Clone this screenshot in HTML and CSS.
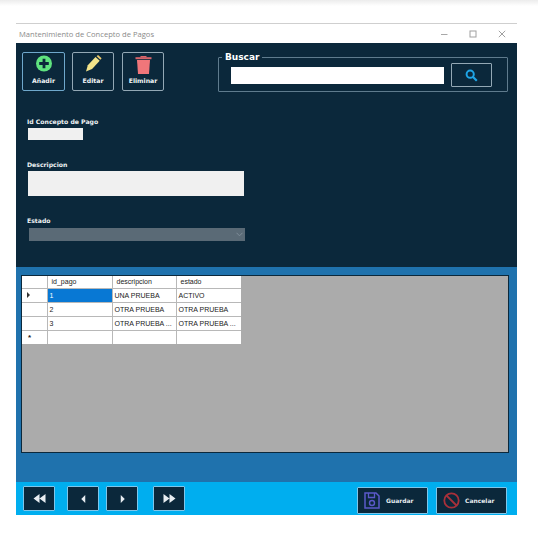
FILE: index.html
```html
<!DOCTYPE html>
<html lang="es">
<head>
<meta charset="utf-8">
<title>Mantenimiento de Concepto de Pagos</title>
<link rel="stylesheet" href="styles.css">
</head>
<body>
<div class="shade"></div>
<main class="window">
  <header class="titlebar">
    <span class="title">Mantenimiento de Concepto de Pagos</span>
    <div class="winctl">
      <svg width="8" height="8" viewBox="0 0 8 8"><path d="M1 4.500h6.500" stroke="#a8a8a8" fill="none"/></svg>
      <svg width="8" height="8" viewBox="0 0 8 8"><rect x="1" y="1" width="6" height="6" stroke="#a0a0a0" fill="none"/></svg>
      <svg width="8" height="8" viewBox="0 0 8 8"><path d="M.8.8l6.400 6.400M7.200.8L.8 7.200" stroke="#a0a0a0" fill="none"/></svg>
    </div>
  </header>

  <section class="form">
    <div class="toolbar">
      <div class="tools">
        <button class="tool active">
          <svg width="16" height="17" viewBox="0 0 16 16"><circle cx="8" cy="8" r="8" fill="#5fe37f"/><path d="M8 3.200v9.600M3.200 8h9.600" stroke="#0b283b" stroke-width="2.800"/></svg>
          <span>Añadir</span>
        </button>
        <button class="tool">
          <svg width="17" height="17" viewBox="0 0 17 17"><path d="M1 16.500l1.800-6.200L10.500 2l4.200 3.800-7.600 8.200z" fill="#f3e48a"/><path d="M11.600 1.200l1.400-1.200 3.600 3.200-1.200 1.600z" fill="#efcb6c"/></svg>
          <span>Editar</span>
        </button>
        <button class="tool">
          <svg width="17" height="19" viewBox="0 0 17 19"><path d="M5.500 1h6v1.400h-6z" fill="#d9666c"/><rect x="0.500" y="2.200" width="16" height="2" fill="#d8646a"/><path d="M2 5h13l-1 14H3z" fill="#f0767a"/></svg>
          <span>Eliminar</span>
        </button>
      </div>
      <fieldset class="search">
        <legend>Buscar</legend>
        <div class="search-row">
          <div class="search-input"></div>
          <button class="search-btn">
            <svg width="13" height="13" viewBox="0 0 13 13"><circle cx="5.200" cy="5.200" r="3.600" fill="none" stroke="#1fa5e6" stroke-width="2"/><path d="M8 8l3.800 3.800" stroke="#1fa5e6" stroke-width="2.200"/></svg>
          </button>
        </div>
      </fieldset>
    </div>

    <div class="field field-id">
      <label>Id Concepto de Pago</label>
      <div class="input input-id"></div>
    </div>
    <div class="field field-desc">
      <label>Descripcion</label>
      <div class="input input-desc"></div>
    </div>
    <div class="field field-estado">
      <label>Estado</label>
      <div class="select">
        <svg width="7" height="5" viewBox="0 0 7 5"><path d="M.5 .8l3 3 3-3" fill="none" stroke="#7f8d98"/></svg>
      </div>
    </div>
  </section>

  <section class="gridarea">
    <div class="grid">
      <table>
        <thead>
          <tr><th class="rh"></th><th>id_pago</th><th>descripcion</th><th>estado</th></tr>
        </thead>
        <tbody>
          <tr><td class="rh"><span class="arrow"></span></td><td class="sel">1</td><td>UNA PRUEBA</td><td>ACTIVO</td></tr>
          <tr><td class="rh"></td><td>2</td><td>OTRA PRUEBA</td><td>OTRA PRUEBA</td></tr>
          <tr><td class="rh"></td><td>3</td><td>OTRA PRUEBA ...</td><td>OTRA PRUEBA ...</td></tr>
          <tr><td class="rh star">*</td><td></td><td></td><td></td></tr>
        </tbody>
      </table>
    </div>
  </section>

  <footer class="navbar">
    <button class="nav nav-first"><svg width="13" height="9" viewBox="0 0 13 9"><path d="M6.500 0v9L.5 4.500zM12.500 0v9L6.500 4.500z" fill="#e8eef2"/></svg></button>
    <button class="nav nav-prev"><svg width="5" height="8" viewBox="0 0 5 9"><path d="M4.500 0v9L0 4.500z" fill="#e8eef2"/></svg></button>
    <button class="nav nav-next"><svg width="5" height="8" viewBox="0 0 5 9"><path d="M.5 0v9L5 4.500z" fill="#e8eef2"/></svg></button>
    <button class="nav nav-last"><svg width="13" height="9" viewBox="0 0 13 9"><path d="M.5 0v9l6-4.500zM6.500 0v9l6-4.500z" fill="#e8eef2"/></svg></button>
    <button class="action action-save">
      <svg width="16" height="17" viewBox="0 0 16 17"><path d="M1 1h11l3 3v12H1z" fill="none" stroke="#5b59c9" stroke-width="1.500"/><path d="M4.500 1v4.500h6V1" fill="none" stroke="#5b59c9" stroke-width="1.300"/><circle cx="8" cy="11" r="2.500" fill="none" stroke="#5b59c9" stroke-width="1.400"/></svg>
      <span>Guardar</span>
    </button>
    <button class="action action-cancel">
      <svg width="17" height="17" viewBox="0 0 17 17"><circle cx="8.500" cy="8.500" r="7.200" fill="none" stroke="#a8303a" stroke-width="1.800"/><path d="M3.500 3.500l10 10" stroke="#a8303a" stroke-width="1.800"/></svg>
      <span>Cancelar</span>
    </button>
  </footer>
</main>
</body>
</html>
```

FILE: styles.css
```css
* { box-sizing: border-box; }
html, body { margin: 0; padding: 0; height: 100%; background: #fff; overflow: hidden; }
body { font-family: "DejaVu Sans", sans-serif; position: relative; }
.shade { height: 6px; margin-bottom: 17px; background: linear-gradient(#ececec, #fff); }
button { font-family: inherit; padding: 0; cursor: pointer; }

.window { width: 501px; margin-left: 16px; }
.titlebar {
  height: 20px; border-top: 1px solid #cfcfcf; display: flex; align-items: center;
  justify-content: space-between; padding: 0 11px 0 3px;
}
.title { font-size: 7.600px; color: #8a8a8a; font-family: "Open Sans", sans-serif; }
.winctl { display: flex; gap: 21px; }

.form { height: 224px; background: #0b283b; padding: 9px 9px 0 6px; }
.toolbar { display: flex; justify-content: space-between; height: 41px; }
.tools { display: flex; }
.tool {
  width: 42px; height: 39px; margin-left: 8px; background: #0b283b; border: 1px solid #93a8b5; border-radius: 2px;
  display: flex; flex-direction: column; align-items: center; justify-content: space-between;
  padding: 2px 0 6px; color: #f2f5f7; font-size: 6.200px; font-weight: 700;
}
.tool.active { border: 1.500px solid #6fa8cc; width: 43px; margin-left: 0; margin-right: -1px; }

.search {
  width: 290px; height: 39px; margin: 1px 0 0; padding: 0 0 0 12px;
  border: 1px solid #5f7b8d; border-radius: 1px;
}
.search legend { color: #fff; font-size: 9px; font-weight: 700; padding: 0 3px; margin-left: -9px; line-height: 9px; }
.search-row { display: flex; align-items: flex-start; gap: 7px; }
.search-input { width: 213px; height: 17px; background: #fff; margin-top: 5px; }
.search-btn {
  width: 41px; height: 24px; margin-top: 1px; background: #0b283b; border: 1px solid #93a8b5;
  border-radius: 1px; display: flex; align-items: center; justify-content: center;
}

.field { display: flex; flex-direction: column; align-items: flex-start; padding-left: 6px; }
.field label { color: #eef2f4; font-size: 6.150px; font-weight: 700; line-height: 8px; margin-left: -1px; }
.field-id { margin-top: 25px; }
.field-desc { margin-top: 21px; }
.field-estado { margin-top: 21px; }
.input { background: #f0f0f0; margin-top: 2px; }
.input-id { width: 55px; height: 12px; }
.input-desc { width: 216px; height: 25px; }
.select {
  width: 216px; height: 13px; margin: 3px 0 0 1px; background: #5a6a76;
  display: flex; align-items: center; justify-content: flex-end; padding-right: 2px;
}

.gridarea { height: 215px; background: #1f72ad; padding: 8px 8px 0 5px; }
.grid { height: 178px; background: #ababab; border: 1px solid #0b283b; }
table { border-collapse: collapse; table-layout: fixed; width: 219px; font-family: "Liberation Sans", sans-serif; font-size: 7px; color: #222; background: #fff; }
th, td { height: 14px; padding: 0 0 0 2px; border: 1px solid #b8b8b8; font-weight: 400; text-align: left; white-space: nowrap; overflow: hidden; }
th { height: 12px; padding-left: 4px; border-top: 0; }
tr > :first-child { border-left: 0; width: 25px; }
tr > :nth-child(2) { width: 65px; }
tr > :nth-child(3) { width: 64px; }
tr > :last-child { border-right: 0; width: 65px; }
tbody tr:last-child td { border-bottom: 0; }
td.sel { background: #0878d4; color: #fff; }
.rh { padding: 0; }
.arrow { display: block; width: 0; height: 0; margin-left: 5px; border-left: 3.500px solid #333; border-top: 3px solid transparent; border-bottom: 3px solid transparent; }
td.star { padding: 2px 0 0 6px; font-size: 8px; font-weight: 700; line-height: 8px; }

.navbar { height: 33px; background: #00aeef; display: flex; align-items: flex-start; padding: 4px 10px 0 7px; }
.nav {
  width: 32px; height: 25px; background: #0b283b; border: 1px solid #7fc6ea; border-radius: 1px;
  display: flex; align-items: center; justify-content: center;
}
.nav-prev { margin-left: 12px; }
.nav-next { margin-left: 7px; }
.nav-last { margin-left: 15px; }
.action {
  width: 71px; height: 27px; margin-top: 1px; background: #0b283b; border: 1px solid #7fc6ea; border-radius: 1px;
  display: flex; align-items: center; gap: 6px; padding-left: 6px;
  color: #e6ecf0; font-size: 6px; font-weight: 700;
}
.action-save { margin-left: auto; }
.action-cancel { margin-left: 8px; gap: 5px; }
```
